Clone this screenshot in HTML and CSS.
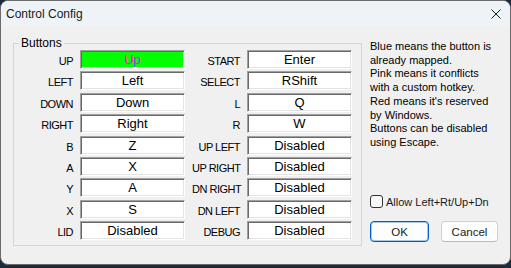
FILE: index.html
```html
<!DOCTYPE html>
<html lang="en">
<head>
    <meta charset="UTF-8">
    <title>Control Config</title>
    <link rel="stylesheet" href="styles.css">
</head>
<body>
    <div class="window">
        <div class="titlebar">
            <span class="title">Control Config</span>
            <svg class="close" width="10" height="10" viewBox="0 0 10 10">
                <path d="M0.5 0.5 L9.5 9.5 M9.5 0.5 L0.5 9.5" stroke="#1a1a1a" stroke-width="1"/>
            </svg>
        </div>

        <div class="content">
            <!-- Buttons group -->
            <div class="group">
                <div class="group-title">Buttons</div>
                <div class="grid">
                    <span class="label">UP</span><span class="key key-conflict">Up</span>
                    <span class="label">START</span><span class="key">Enter</span>

                    <span class="label">LEFT</span><span class="key">Left</span>
                    <span class="label">SELECT</span><span class="key">RShift</span>

                    <span class="label">DOWN</span><span class="key">Down</span>
                    <span class="label">L</span><span class="key">Q</span>

                    <span class="label">RIGHT</span><span class="key">Right</span>
                    <span class="label">R</span><span class="key">W</span>

                    <span class="label">B</span><span class="key">Z</span>
                    <span class="label">UP LEFT</span><span class="key">Disabled</span>

                    <span class="label">A</span><span class="key">X</span>
                    <span class="label">UP RIGHT</span><span class="key">Disabled</span>

                    <span class="label">Y</span><span class="key">A</span>
                    <span class="label">DN RIGHT</span><span class="key">Disabled</span>

                    <span class="label">X</span><span class="key">S</span>
                    <span class="label">DN LEFT</span><span class="key">Disabled</span>

                    <span class="label">LID</span><span class="key">Disabled</span>
                    <span class="label">DEBUG</span><span class="key">Disabled</span>
                </div>
            </div>

            <!-- Help text and actions -->
            <div class="side">
                <p class="help">
                    Blue means the button is<br>
                    already mapped.<br>
                    Pink means it conflicts<br>
                    with a custom hotkey.<br>
                    Red means it's reserved<br>
                    by Windows.<br>
                    Buttons can be disabled<br>
                    using Escape.
                </p>

                <label class="check">
                    <input type="checkbox">
                    <span>Allow Left+Rt/Up+Dn</span>
                </label>

                <div class="actions">
                    <button class="btn btn-default">OK</button>
                    <button class="btn btn-cancel">Cancel</button>
                </div>
            </div>
        </div>
    </div>
</body>
</html>
```

FILE: styles.css
```css
body {
    margin: 0;
    background-color: #1c2a3a;
    font-family: "Liberation Sans", Arial, sans-serif;
}
.window {
    width: 511px;
    height: 265px;
    box-sizing: border-box;
    border: 1px solid #6b6b6b;
    border-radius: 8px;
    overflow: hidden;
    background-color: #f0f0f0;
    display: flex;
    flex-direction: column;
}
.titlebar {
    height: 25px;
    flex-shrink: 0;
    background-color: #eef3f8;
    display: flex;
    align-items: center;
    justify-content: space-between;
    padding: 0 9px 0 5px;
}
.title {
    font-size: 12px;
    color: #1a1a1a;
}
.close {
    display: block;
}
.content {
    flex-grow: 1;
    display: flex;
    align-items: flex-start;
    padding: 17px 0 0 12px;
}
.group {
    width: 349px;
    box-sizing: border-box;
    border: 1px solid #d5d5d5;
    padding: 0 0 5px 0;
}
.group-title {
    width: fit-content;
    margin: -8px 0 0 5px;
    padding: 0 2px;
    background-color: #f0f0f0;
    font-size: 12px;
    line-height: 14px;
    color: #000;
}
.grid {
    display: grid;
    grid-template-columns: 59px 105px 48px 105px;
    grid-auto-rows: 19px;
    column-gap: 7px;
    row-gap: 2.375px;
}
.label {
    font-size: 11px;
    letter-spacing: -0.5px;
    line-height: 19px;
    padding-top: 2px;
    text-align: right;
    white-space: nowrap;
    color: #000;
}
.key {
    box-sizing: border-box;
    height: 19px;
    border: 1px solid;
    border-color: #a0a0a0 #ffffff #ffffff #a0a0a0;
    box-shadow: inset 1px 1px 0 #696969, inset -1px -1px 0 #e3e3e3;
    background-color: #fff;
    font-size: 13px;
    line-height: 17px;
    text-align: center;
    color: #000;
}
.key-conflict {
    background-color: #00ff00;
    color: #ff00ff;
}
.side {
    flex-grow: 1;
    align-self: stretch;
    display: flex;
    flex-direction: column;
    padding: 0 12px 22px 8px;
    margin-top: -17px;
}
.help {
    margin: 14px 0 0 0;
    font-size: 11px;
    line-height: 13.7px;
    color: #000;
}
.check {
    margin-top: auto;
    display: flex;
    align-items: center;
    gap: 3px;
    font-size: 11px;
    color: #1a1a1a;
}
.check input {
    appearance: none;
    margin: 0;
    width: 13px;
    height: 13px;
    box-sizing: border-box;
    border: 1px solid #333;
    border-radius: 3px;
    background-color: #f8f8f8;
}
.actions {
    display: flex;
    gap: 12px;
    margin-top: 13px;
}
.btn {
    height: 21px;
    box-sizing: border-box;
    font-family: "Liberation Sans", Arial, sans-serif;
    font-size: 11.5px;
    color: #1a1a1a;
    background-color: #fdfdfd;
    border: 1px solid #d0d0d0;
    border-bottom-color: #b8b8b8;
    border-radius: 4px;
    padding: 0;
}
.btn-default {
    width: 59px;
    border-color: #005fb8;
    box-shadow: inset 0 0 0 1px #a8c8e8;
}
.btn-cancel {
    width: 57px;
}
```
